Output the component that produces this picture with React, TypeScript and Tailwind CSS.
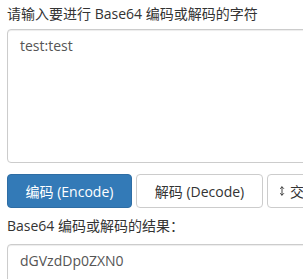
import { MoveVertical } from "lucide-react";

const font = { fontFamily: '"Open Sans", "Noto Sans CJK SC", sans-serif' };

export default function App() {
  return (
    <div className="h-[279px] w-[303px] overflow-hidden bg-white text-[14px] text-[#333]" style={font}>
      <div className="w-[520px] px-[7px] pt-[3px]">
        <label className="block leading-[22px]">请输入要进行 Base64 编码或解码的字符</label>
        <textarea
          defaultValue="test:test"
          className="mt-[4px] block h-[134px] w-full resize-none rounded-[4px] border border-[#ccc] px-[12px] py-[6px] leading-[20px] text-[#555] shadow-[inset_0_1px_1px_rgba(0,0,0,0.075)] outline-none"
        />
        <div className="mt-[11px] flex gap-[4px]">
          <button className="h-[34px] w-[125px] rounded-[4px] border border-[#2e6da4] bg-[#337ab7] text-white">
            编码 (Encode)
          </button>
          <button className="h-[34px] w-[127px] rounded-[4px] border border-[#ccc] bg-white text-[#333]">
            解码 (Decode)
          </button>
          <button className="flex h-[34px] w-[120px] items-center gap-[3px] rounded-[4px] border border-[#ccc] bg-white pl-[9px] text-[#333]">
            <MoveVertical className="h-[14px] w-[10px]" strokeWidth={2.2} />
            交换
          </button>
        </div>
        <label className="mt-[7px] block leading-[22px]">Base64 编码或解码的结果：</label>
        <textarea
          readOnly
          defaultValue="dGVzdDp0ZXN0"
          className="mt-[7px] block h-[80px] w-full resize-none rounded-[4px] border border-[#ccc] px-[12px] py-[6px] leading-[20px] text-[#555] shadow-[inset_0_1px_1px_rgba(0,0,0,0.075)] outline-none"
        />
      </div>
    </div>
  );
}
